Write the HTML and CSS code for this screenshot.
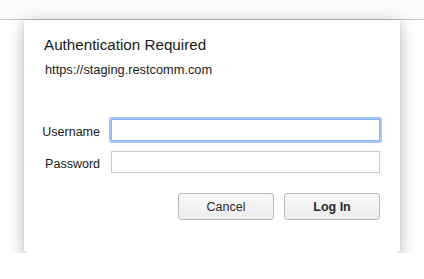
FILE: index.html
```html
<!DOCTYPE html>
<html>
<head>
<meta charset="utf-8">
<link rel="stylesheet" href="styles.css">
</head>
<body>
<div class="topbar"></div>
<div class="dialog">
  <div class="title">Authentication Required</div>
  <div class="url">https://staging.restcomm.com</div>
  <div class="form">
    <label class="label">Username</label>
    <div class="input focused"></div>
    <label class="label">Password</label>
    <div class="input"></div>
  </div>
  <div class="actions">
    <button class="btn">Cancel</button>
    <button class="btn primary">Log In</button>
  </div>
</div>
</body>
</html>
```
FILE: styles.css
```css
html, body {
  margin: 0;
  padding: 0;
  background: #ffffff;
  font-family: "Liberation Sans", Arial, sans-serif;
  color: #1f1f1f;
}
.topbar {
  height: 19px;
  background: #fbfbfb;
  border-bottom: 1px solid #c2c2c2;
}
.dialog {
  box-sizing: border-box;
  margin-left: 24px;
  width: 376px;
  height: 233px;
  background: #ffffff;
  border-radius: 0 0 4px 4px;
  box-shadow: 0 4px 16px rgba(0, 0, 0, 0.3), 0 0 1px rgba(0, 0, 0, 0.3);
  padding: 16px 20px 0 20px;
  display: flex;
  flex-direction: column;
}
.title {
  font-size: 15.2px;
  line-height: 18px;
  color: #1a1a1a;
}
.url {
  margin-top: 9px;
  margin-left: 1px;
  font-size: 12.8px;
  line-height: 14px;
  color: #1a1a1a;
}
.form {
  margin-top: 42px;
  display: grid;
  grid-template-columns: 56px 1fr;
  column-gap: 11px;
  row-gap: 10px;
  align-items: center;
}
.label {
  justify-self: end;
  font-size: 12.5px;
  line-height: 14px;
  padding-top: 3px;
  white-space: nowrap;
  color: #1a1a1a;
}
.input {
  box-sizing: border-box;
  height: 22px;
  border: 1px solid #c9c9c9;
  background: #ffffff;
}
.input.focused {
  border-color: #8fb5f2;
  border-radius: 1px;
  box-shadow: 0 0 0 2px #a2c3f6;
}
.actions {
  margin-top: 20px;
  display: flex;
  justify-content: flex-end;
  gap: 10px;
}
.btn {
  box-sizing: border-box;
  width: 96px;
  height: 27px;
  border: 1px solid #b9b9b9;
  border-radius: 3px;
  background: linear-gradient(#f8f8f8, #ececec);
  font-family: "Liberation Sans", Arial, sans-serif;
  font-size: 12.5px;
  color: #2a2a2a;
  padding: 0;
}
.btn.primary {
  font-weight: bold;
}
```
